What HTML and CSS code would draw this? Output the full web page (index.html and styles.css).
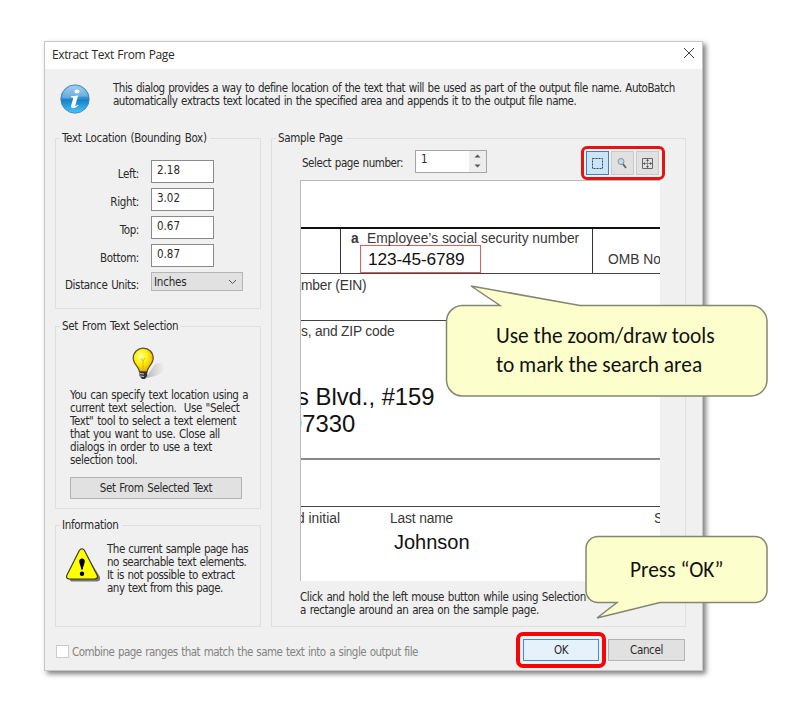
FILE: index.html
```
<!DOCTYPE html>
<html lang="en">

<head>
  <meta charset="UTF-8" />
  <title>Extract Text From Page</title>
  <link rel="stylesheet" href="styles.css">
</head>

<body>

  <div class="dialog">
    <div class="titlebar">
      <span class="title">Extract Text From Page</span>
      <svg class="close" width="12" height="12" viewBox="0 0 12 12"><path d="M1 1L11 11M11 1L1 11" stroke="#444" fill="none" /></svg>
    </div>

    <div class="intro">
      <svg width="30" height="30" viewBox="0 0 30 30">
        <defs>
          <linearGradient id="blue" x1="0" y1="0" x2="0" y2="1">
            <stop offset="0" stop-color="#8fc4e8" />
            <stop offset=".45" stop-color="#3795d2" />
            <stop offset=".55" stop-color="#1682cb" />
            <stop offset="1" stop-color="#4cc5f5" />
          </linearGradient>
        </defs>
        <circle cx="15" cy="15" r="14.2" fill="url(#blue)" stroke="#3f86b8" stroke-width=".8" />
        <path d="M2 14C3 5 10 2 15 2C22 2 27 7 28 13C20 11 11 16 2 14Z" fill="#fff" opacity=".22" />
        <ellipse cx="17" cy="7.5" rx="2.5" ry="2" fill="#fff" />
        <path d="M11 12.2L18.2 11.5L15.4 21C15 22.4 16 22.3 18 20.8L18.4 21.5C15.5 24.7 10.2 25.4 11.2 21.4L13.1 14.7C13.4 13.3 12.5 13.2 10.9 13.2Z" fill="#fff" />
      </svg>
      <p>This dialog provides a way to define location of the text that will be used as part of the output file name. AutoBatch<br>automatically extracts text located in the specified area and appends it to the output file name.</p>
    </div>

    <div class="columns">
      <div class="left">
        <fieldset class="location">
          <legend>Text Location (Bounding Box)</legend>
          <div class="row"><label for="l">Left:</label><input id="l" type="text" value="2.18" /></div>
          <div class="row"><label for="r">Right:</label><input id="r" type="text" value="3.02" /></div>
          <div class="row"><label for="t">Top:</label><input id="t" type="text" value="0.67" /></div>
          <div class="row"><label for="b">Bottom:</label><input id="b" type="text" value="0.87" /></div>
          <div class="row units">
            <label>Distance Units:</label>
            <div class="select">Inches <svg width="9" height="6" viewBox="0 0 9 6"><path d="M1 1L4.5 4.5L8 1" fill="none" stroke="#555" /></svg></div>
          </div>
        </fieldset>

        <fieldset class="selection">
          <legend>Set From Text Selection</legend>
          <svg class="bulb" width="34" height="34" viewBox="0 0 34 34">
            <defs>
              <radialGradient id="glow" cx=".4" cy=".35" r=".65">
                <stop offset="0" stop-color="#ffffb0" />
                <stop offset=".5" stop-color="#fff200" />
                <stop offset="1" stop-color="#eda900" />
              </radialGradient>
              <linearGradient id="shade"><stop offset="0" stop-color="#999" /><stop offset="1" stop-color="#ddd" stop-opacity=".3" /></linearGradient>
            </defs>
            <path d="M14 31L21 20C24 14 33 15 32 21C31 27 23 30 14 31Z" fill="url(#shade)" opacity=".75" />
            <path d="M7.5 25C7.5 20 1.2 17.5 1.2 11.3C1.2 5.3 5.8 1.2 11.2 1.2C16.8 1.2 21.2 5.3 21.2 11.3C21.2 17.5 15 20 15 25Z" fill="url(#glow)" stroke="#54523c" stroke-width="1.2" />
            <path d="M9 11L11 14L13 11M11 14V23" fill="none" stroke="#f19c17" stroke-width=".8" />
            <path d="M7.5 24.5H15.2V29L13 32H10L7.5 29Z" fill="#333" />
            <path d="M8 26.5L12 27M8 29L12 29.5" stroke="#c5c9d2" stroke-width="1" />
          </svg>
          <p>You can specify text location using a<br>current text selection.&nbsp; Use "Select<br>Text" tool to select a text element<br>that you want to use. Close all<br>dialogs in order to use a text<br>selection tool.</p>
          <button type="button" class="set-btn">Set From Selected Text</button>
        </fieldset>

        <fieldset class="information">
          <legend>Information</legend>
          <div class="notice">
            <svg width="34" height="34" viewBox="0 0 34 34">
              <path d="M18 3L34 29C35 32 33 33.5 31 33.5H5L3 31Z" fill="#777" />
              <path d="M13.3 2.5C14.7.4 17.2.4 18.5 2.5L31 27C32.2 29.5 31 31 28.6 31H3.3C.9 31-.1 29.4 1 27Z" fill="#ff0" stroke="#3c3c1e" stroke-width="1.2" />
              <path d="M13.2 13C13.2 9.5 18.8 9.5 18.8 13C18.8 16 17 18 16.8 21.5H15.2C15 18 13.2 16 13.2 13Z" fill="#000" />
              <circle cx="16" cy="25.7" r="2.2" fill="#000" />
            </svg>
            <p>The current sample page has<br>no searchable text elements.<br>It is not possible to extract<br>any text from this page.</p>
          </div>
        </fieldset>
      </div>

      <fieldset class="sample">
        <legend>Sample Page</legend>
        <div class="toolbar">
          <label for="page">Select page number:</label>
          <div class="spinner">
            <input id="page" type="text" value="1" />
            <div class="arrows">
              <svg width="17" height="10" viewBox="0 0 17 10"><path d="M5.5 6.5L8.5 3.5L11.5 6.5Z" fill="#555" /></svg>
              <svg width="17" height="10" viewBox="0 0 17 10"><path d="M5.5 3.5L8.5 6.5L11.5 3.5Z" fill="#555" /></svg>
            </div>
          </div>
          <div class="tools">
            <div class="tool active"><svg width="13" height="13" viewBox="0 0 13 13"><rect x="1.5" y="1.5" width="10" height="10" fill="none" stroke="#345" stroke-dasharray="2 1" /></svg></div>
            <div class="tool"><svg width="13" height="13" viewBox="0 0 13 13"><circle cx="5" cy="4.5" r="3" fill="#bcdcec" stroke="#8a9299" /><path d="M7 7L10 11" stroke="#666" stroke-width="1.8" /></svg></div>
            <div class="tool"><svg width="13" height="13" viewBox="0 0 13 13"><path d="M1.5 1.5H11.5V11.5H1.5Z" fill="none" stroke="#666" /><path d="M6.5 2V11M2 6.5H11" fill="none" stroke="#888" /><path d="M6.5 2L5 4H8ZM6.5 11L5 9H8ZM2 6.5L4 5V8ZM11 6.5L9 5V8Z" fill="#555" /></svg></div>
          </div>
        </div>

        <div class="page">
          <div class="band top"></div>
          <div class="band ssn">
            <div class="cell blank"></div>
            <div class="cell number">
              <div class="caption"><b>a</b>Employee’s social security number</div>
              <div class="marked">123-45-6789</div>
            </div>
            <div class="cell omb">OMB No</div>
          </div>
          <div class="band ein">mber (EIN)</div>
          <div class="band address">
            <div class="caption">s, and ZIP code</div>
            <div class="value street"><span>s Blvd., #159</span></div>
            <div class="value zip"><span>97330</span></div>
          </div>
          <div class="band"></div>
          <div class="band names">
            <div class="initial"><span>d initial</span></div>
            <div class="last">Last name<div class="value">Johnson</div></div>
            <div class="suffix">S</div>
          </div>
        </div>
        <p class="hint">Click and hold the left mouse button while using Selection tool<br>a rectangle around an area on the sample page.</p>
      </fieldset>
    </div>

    <div class="footer">
      <div class="checkbox"></div>
      <span class="combine">Combine page ranges that match the same text into a single output file</span>
      <div class="ring"><button type="button" class="ok">OK</button></div>
      <button type="button" class="cancel">Cancel</button>
    </div>
  </div>

  <div class="callout draw">
    <svg width="324" height="116" viewBox="0 0 324 116"><path d="M17 21.5H55L26 2L135 21.5H306A16 16 0 0 1 322 37.5V96A16 16 0 0 1 306 112H17A16 16 0 0 1 1.5 96V37.5A16 16 0 0 1 17 21.5Z" /></svg>
    <p>Use the zoom/draw tools<br>to mark the search area</p>
  </div>

  <div class="callout press">
    <svg width="184" height="86" viewBox="0 0 184 86"><path d="M13 1.5H170A12 12 0 0 1 182 13.5V55.5A12 12 0 0 1 170 67.5H75L12 83L32 67.5H13A12 12 0 0 1 1 55.5V13.5A12 12 0 0 1 13 1.5Z" /></svg>
    <p>Press “OK”</p>
  </div>

</body>

</html>
```
FILE: styles.css
```
* {
  box-sizing: border-box;
}

body {
  margin: 0;
  height: 709px;
  padding: 41px 0 0 44px;
  background: #fff;
  color: #2a2a2a;
  font: 11.5px/13px "DejaVu Sans Condensed", "DejaVu Sans", sans-serif;
  font-stretch: condensed;
  letter-spacing: -0.35px;
  word-spacing: 0.8px;
  overflow: hidden;
}

p {
  margin: 0;
  white-space: nowrap;
}

svg {
  display: block;
  flex: none;
}

input, button {
  font: inherit;
  color: inherit;
  letter-spacing: inherit;
  word-spacing: inherit;
  margin: 0;
}

.dialog {
  width: 659px;
  height: 630px;
  border: 1px solid #c6c6c6;
  background: #f0f0f0;
  box-shadow: 3px 3px 5px rgba(0, 0, 0, 0.5);
}

.titlebar {
  display: flex;
  justify-content: space-between;
  height: 27px;
  padding: 4px 7px 0;
  background: #fff;
}

.title {
  font: 12px/17px "Open Sans", sans-serif;
  letter-spacing: -0.4px;
}

.close {
  margin-top: 1px;
}

.intro {
  display: flex;
  height: 62px;
  padding: 15px 0 0 15px;
}

.intro p {
  margin: -2px 0 0 23px;
  letter-spacing: -0.47px;
}

.columns {
  display: flex;
  gap: 10px;
  margin-left: 10px;
}

.left {
  width: 206px;
}

fieldset {
  margin: 0;
  padding: 0;
  border: 1px solid #dfdfdf;
  min-width: 0;
}

legend {
  height: 14px;
  margin-left: 4px;
  padding: 1px 3px 0 2px;
  letter-spacing: -0.3px;
}

.location {
  height: 178px;
  padding-top: 15px;
}

.row {
  display: flex;
  height: 28px;
}

.row label {
  width: 83px;
  padding-top: 8px;
  text-align: right;
  white-space: nowrap;
}

.row input {
  width: 63px;
  height: 23px;
  margin-left: 12px;
  padding: 0 5px 4px;
  border: 1px solid #8a8a8a;
  background: #fff;
  letter-spacing: 0;
}

.units label {
  padding-top: 7px;
}

.select {
  display: flex;
  align-items: center;
  justify-content: space-between;
  width: 92px;
  height: 19px;
  margin-left: 12px;
  padding: 1px 5px 0 2px;
  border: 1px solid #b5b5b5;
  background: #e1e1e1;
  letter-spacing: -0.2px;
}

.selection {
  height: 190px;
  margin-top: 10px;
}

.bulb {
  margin: 14px 0 0 76px;
}

.selection p {
  margin: 8px 0 0 14px;
  letter-spacing: -0.4px;
}

.set-btn {
  display: block;
  width: 172px;
  height: 22px;
  margin: 10px 0 0 14px;
}

button {
  padding: 0;
  border: 1px solid #b4b4b4;
  background: #e1e1e1;
}

.information {
  height: 109px;
  margin-top: 9px;
}

.notice {
  display: flex;
  gap: 7px;
  padding: 11px 0 0 10px;
}

.notice svg {
  margin-top: 5px;
}

.notice p {
  letter-spacing: -0.5px;
}

.sample {
  width: 415px;
  height: 496px;
}

.toolbar {
  display: flex;
  height: 35px;
  padding-left: 30px;
}

.toolbar label {
  width: 113px;
  padding-top: 12px;
  letter-spacing: -0.45px;
}

.spinner {
  display: flex;
  width: 72px;
  height: 23px;
  margin-top: 5px;
  border: 1px solid #a5a5a5;
}

.spinner input {
  width: 53px;
  padding: 0 5px 4px;
  border: 0;
}

.arrows {
  width: 17px;
  background: #ededed;
}

.tools {
  display: flex;
  gap: 2px;
  width: 84px;
  height: 34px;
  margin: 1px 0 0 94px;
  padding: 2px;
  border: 3px solid #e21414;
  border-radius: 6px;
}

.tool {
  display: flex;
  align-items: center;
  justify-content: center;
  width: 23px;
  height: 24px;
  border: 1px solid #c9c9c9;
  background: #e1e1e1;
}

.tool.active {
  border-color: #3f82b8;
  background: #cce4f7;
}

.page {
  width: 360px;
  height: 401px;
  margin-left: 28px;
  border: 1px solid #bbb;
  border-width: 1px 0 0 1px;
  background: #fff;
  color: #383838;
  font: 13.8px/16px "Liberation Sans", sans-serif;
  letter-spacing: 0;
  word-spacing: 0;
  overflow: hidden;
}

.band {
  height: 47px;
  border-bottom: 1px solid #444;
  white-space: nowrap;
}

.band.top {
  height: 48px;
  border-bottom: 2px solid #111;
}

.ssn {
  display: flex;
  height: 45px;
}

.cell {
  flex: none;
  border-right: 1px solid #333;
}

.blank {
  width: 40px;
}

.number {
  width: 252px;
  padding: 2px 0 0 10px;
}

.number b {
  display: inline-block;
  width: 16px;
}

.marked {
  width: 121px;
  height: 28px;
  margin: -2px 0 0 9px;
  padding-left: 7px;
  border: 1px solid #e85a5a;
  color: #111;
  font-size: 17.3px;
  letter-spacing: -0.15px;
  line-height: 26px;
}

.omb {
  border: 0;
  padding: 23px 0 0 15px;
}

.ein {
  padding-top: 4px;
  letter-spacing: -0.2px;
}

.address {
  height: 139px;
  border-bottom: 2px solid #888;
}

.address .caption {
  padding-top: 3px;
  letter-spacing: -0.2px;
}

.value {
  color: #111;
  font-size: 20px;
  line-height: 27px;
}

.street {
  margin-top: 43px;
  font-size: 23.8px;
}

.zip {
  font-size: 23.8px;
}

.zip span {
  margin-left: -12px;
}

.street span {
  margin-left: -4px;
}

.names {
  display: flex;
  height: 80px;
  padding-top: 4px;
  border: 0;
}

.initial {
  flex: none;
  width: 89px;
}

.initial span {
  margin-left: -4px;
}

.last {
  flex: none;
  width: 264px;
  letter-spacing: -0.15px;
}

.last .value {
  margin: 2px 0 0 4px;
  letter-spacing: 0;
}

.hint {
  margin: 10px 0 0 28px;
  letter-spacing: -0.39px;
}

.footer {
  display: flex;
  margin: 5px 0 0 11px;
}

.checkbox {
  width: 13px;
  height: 13px;
  margin-top: 13px;
  border: 1px solid #ccc;
  background: #fff;
}

.combine {
  width: 444px;
  margin: 14px 0 0 3px;
  color: #838383;
  letter-spacing: -0.52px;
  white-space: nowrap;
}

.ring {
  height: 36px;
  padding: 3px;
  border: 4px solid #f50505;
  border-radius: 7px;
}

.ring button {
  display: block;
  width: 76px;
  height: 22px;
}

.ok {
  border-color: #3c8fd0;
  background: #e5f1fb;
}

.cancel {
  width: 77px;
  height: 22px;
  margin: 7px 0 0 2px;
}

.callout {
  position: absolute;
  color: #111;
  font: 21.4px/29px Carlito, Lato, sans-serif;
  letter-spacing: 0;
  word-spacing: 0;
}

.callout path {
  fill: #fcffcc;
  stroke: #858574;
  stroke-width: 1.5;
}

.callout p {
  position: absolute;
}

.draw {
  left: 445px;
  top: 284px;
}

.draw p {
  left: 51px;
  top: 38px;
}

.press {
  left: 585px;
  top: 535px;
}

.press p {
  left: 45px;
  top: 21px;
}
```
